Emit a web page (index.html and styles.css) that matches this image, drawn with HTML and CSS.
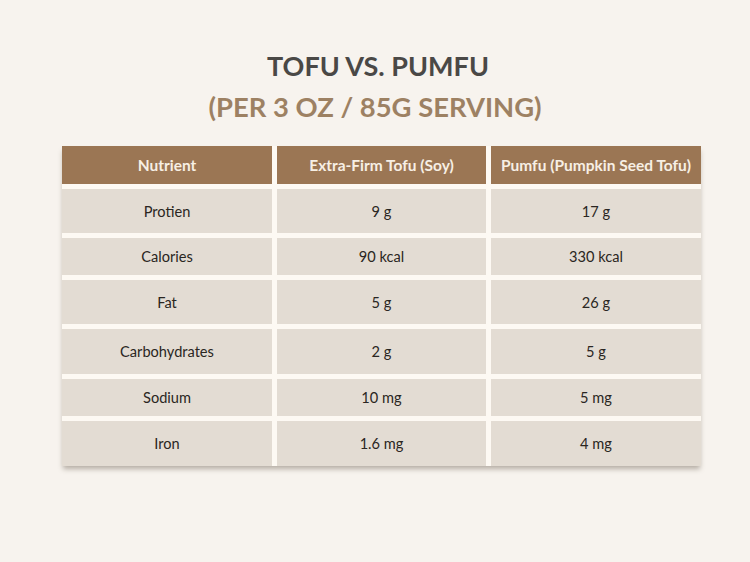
FILE: index.html
```html
<!DOCTYPE html>
<html>
<head>
<meta charset="utf-8">
<link rel="stylesheet" href="styles.css">
</head>
<body>
<div class="page">
  <h1 class="title">TOFU VS. PUMFU</h1>
  <h2 class="subtitle">(PER 3 OZ / 85G SERVING)</h2>
  <div class="table">
    <div class="cell head">Nutrient</div>
    <div class="cell head">Extra-Firm Tofu (Soy)</div>
    <div class="cell head">Pumfu (Pumpkin Seed Tofu)</div>

    <div class="cell tall">Protien</div>
    <div class="cell tall">9 g</div>
    <div class="cell tall">17 g</div>

    <div class="cell short">Calories</div>
    <div class="cell short">90 kcal</div>
    <div class="cell short">330 kcal</div>

    <div class="cell tall">Fat</div>
    <div class="cell tall">5 g</div>
    <div class="cell tall">26 g</div>

    <div class="cell tall">Carbohydrates</div>
    <div class="cell tall">2 g</div>
    <div class="cell tall">5 g</div>

    <div class="cell short">Sodium</div>
    <div class="cell short">10 mg</div>
    <div class="cell short">5 mg</div>

    <div class="cell tall">Iron</div>
    <div class="cell tall">1.6 mg</div>
    <div class="cell tall">4 mg</div>
  </div>
</div>
</body>
</html>
```
FILE: styles.css
```css
html, body {
  margin: 0;
  padding: 0;
  background: #f7f3ee;
}
body {
  width: 750px;
  height: 562px;
  font-family: Lato, "Noto Sans", sans-serif;
}
.page {
  display: flex;
  flex-direction: column;
  align-items: center;
  padding-top: 49px;
}
.title {
  margin: 0 0 0 6px;
  font-size: 27px;
  font-weight: 700;
  line-height: 34px;
  color: #4a4846;
}
.subtitle {
  margin: 7px 0 0 0;
  font-size: 27.4px;
  font-weight: 700;
  line-height: 34px;
  color: #9d8163;
}
.table {
  align-self: flex-start;
  margin: 22px 0 0 62px;
  display: grid;
  grid-template-columns: 210px 209px 210px;
  grid-template-rows: 38px 44px 37px 44px 45px 37px 45px;
  gap: 5px;
  background: #fdf9f3;
  box-shadow: 0 4px 5px -1px rgba(60, 45, 30, 0.35);
}
.cell {
  display: flex;
  align-items: center;
  justify-content: center;
  background: #e3dcd3;
  color: #2a2622;
  font-size: 14.6px;
}
.cell.head {
  background: #9b7654;
  color: #f7efe4;
  font-weight: 700;
  font-size: 15.5px;
}
```
